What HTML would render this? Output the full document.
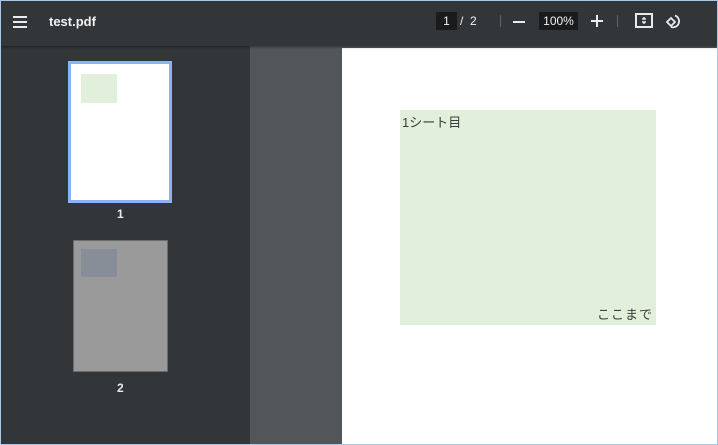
<!DOCTYPE html>
<html><head><meta charset="utf-8"><style>
*{margin:0;padding:0;box-sizing:border-box}
body{width:718px;height:445px;overflow:hidden;background:#525659;font-family:"Liberation Sans","Noto Sans CJK JP",sans-serif;position:relative}
.frame{position:absolute;inset:0;border:1px solid #a9c8e6;z-index:10;pointer-events:none}
.hdr{position:absolute;left:0;top:0;width:718px;height:46px;background:#323639;box-shadow:0 1px 3px rgba(0,0,0,.4);z-index:5;color:#f1f1f1}
.side{position:absolute;left:0;top:46px;width:250px;height:399px;background:#333639}
.page{position:absolute;left:342px;top:48px;width:376px;height:397px;background:#fff}
.g{position:absolute;background:#e2efda}
.t{position:absolute;font-size:12px;color:#e8eaed;font-weight:bold}
</style></head><body>
<div class="hdr">
 <svg style="position:absolute;left:12px;top:14px" width="16" height="16"><path d="M1 3h14M1 8h14M1 13h14" stroke="#e8eaed" stroke-width="2"/></svg>
 <div style="position:absolute;left:49px;top:14px;font-size:13px;font-weight:bold">test.pdf</div>
 <div style="position:absolute;left:436px;top:12px;width:21px;height:18px;background:#191b1c;font-size:12px;text-align:center;line-height:18px">1</div>
 <div style="position:absolute;left:460px;top:14px;font-size:12px">/&nbsp;&nbsp;2</div>
 <div style="position:absolute;left:500px;top:15px;width:1px;height:12px;background:#5f6368"></div>
 <div style="position:absolute;left:513px;top:21px;width:12px;height:2px;background:#e8eaed"></div>
 <div style="position:absolute;left:539px;top:12px;width:39px;height:18px;background:#191b1c;font-size:12px;text-align:center;line-height:18px">100%</div>
 <svg style="position:absolute;left:591px;top:15px" width="12" height="12"><path d="M0 6h12M6 0v12" stroke="#e8eaed" stroke-width="2"/></svg>
 <div style="position:absolute;left:617px;top:15px;width:1px;height:12px;background:#5f6368"></div>
 <svg style="position:absolute;left:635px;top:13px" width="18" height="16"><rect x="1" y="1" width="16" height="13" fill="none" stroke="#e8eaed" stroke-width="2"/><path d="M9 4v2M9 9v2M7 6h4M7 9h4" stroke="#e8eaed" stroke-width="1.5"/></svg>
 <svg style="position:absolute;left:665px;top:12px" width="18" height="18"><path d="M10 3.5A6 6 0 1 1 6 15" fill="none" stroke="#e8eaed" stroke-width="1.8"/><path d="M2 10l4-4 4 4-4 4z" fill="none" stroke="#e8eaed" stroke-width="1.8"/></svg>
</div>
<div class="side"></div>
<div style="position:absolute;left:68px;top:61px;width:104px;height:142px;border:3px solid #8ab4f8;background:#fff"></div>
<div class="g" style="left:81px;top:74px;width:36px;height:29px"></div>
<div class="t" style="left:117px;top:207px">1</div>
<div style="position:absolute;left:73px;top:240px;width:95px;height:132px;background:#9a9a9a;border:1px solid #6a6d70"></div>
<div style="position:absolute;left:81px;top:249px;width:36px;height:28px;background:#888e98"></div>
<div class="t" style="left:117px;top:381px">2</div>
<div class="page"></div>
<div class="g" style="left:400px;top:110px;width:256px;height:215px"></div>
<div style="position:absolute;left:402px;top:112px;font-size:13px;color:#3c3c3c">1シート目</div>
<div style="position:absolute;left:597px;top:304px;font-size:13px;color:#3c3c3c;letter-spacing:1px">ここまで</div>
<div class="frame"></div>
</body></html>
